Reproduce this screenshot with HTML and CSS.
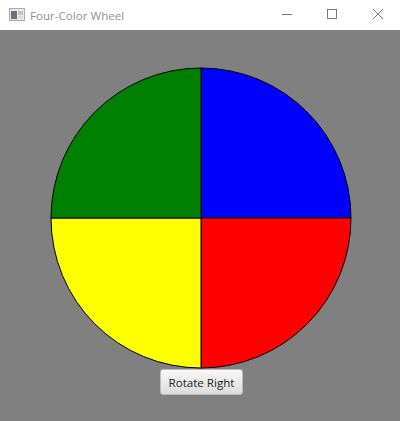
FILE: index.html
```html
<!DOCTYPE html>
<html lang="en">
<head>
  <meta charset="UTF-8">
  <title>Four-Color Wheel</title>
  <link rel="stylesheet" href="styles.css">
</head>
<body>
  <div class="titlebar">
    <svg class="app-icon" width="16" height="16" viewBox="0 0 16 16">
      <rect x="0.5" y="1.5" width="15" height="12" fill="#e8eaec" stroke="#a8acb0"/>
      <rect x="2" y="4" width="6" height="8" fill="#66747c"/>
      <rect x="9" y="4" width="5" height="4" fill="#c0c4c8"/>
      <rect x="9" y="9" width="5" height="3" fill="#dcdee0"/>
    </svg>
    <span class="title">Four-Color Wheel</span>
    <div class="window-buttons">
      <svg width="12" height="12" viewBox="0 0 12 12"><path d="M2 6.5H12" stroke="#777" fill="none"/></svg>
      <svg width="12" height="12" viewBox="0 0 12 12"><rect x="1.5" y="1.5" width="9" height="9" stroke="#777" fill="none"/></svg>
      <svg width="12" height="12" viewBox="0 0 12 12"><path d="M1 1L11 11M11 1L1 11" stroke="#777" fill="none"/></svg>
    </div>
  </div>
  <div class="stage">
    <svg class="wheel" width="302" height="302" viewBox="-151 -151 302 302">
      <path d="M0 0V-150A150 150 0 0 1 150 0Z" fill="#0000ff" stroke="#000"/>
      <path d="M0 0H150A150 150 0 0 1 0 150Z" fill="#ff0000" stroke="#000"/>
      <path d="M0 0V150A150 150 0 0 1 -150 0Z" fill="#ffff00" stroke="#000"/>
      <path d="M0 0H-150A150 150 0 0 1 0 -150Z" fill="#008000" stroke="#000"/>
    </svg>
    <button class="rotate-btn">Rotate Right</button>
  </div>
</body>
</html>
```
FILE: styles.css
```css
html, body {
  height: 100%;
}
body {
  margin: 0;
  background-color: #808080;
  font-family: 'Open Sans', 'Liberation Sans', sans-serif;
  overflow: hidden;
}
.titlebar {
  display: flex;
  align-items: center;
  height: 30px;
  padding-left: 9px;
  background-color: #fff;
}
.app-icon {
  margin-right: 5px;
}
.title {
  font-size: 11.6px;
  color: #8f8f8f;
}
.window-buttons {
  display: flex;
  gap: 34px;
  margin-left: auto;
  margin-right: 16px;
  margin-bottom: 2px;
}
.stage {
  display: flex;
  flex-direction: column;
  align-items: center;
  padding-top: 37px;
  padding-left: 2px;
}
.wheel {
  display: block;
}
.rotate-btn {
  width: 83px;
  height: 26px;
  margin-left: 1px;
  padding: 0;
  border: 1px solid #bcbcbc;
  border-radius: 3px;
  background: linear-gradient(#f8f8f8, #dcdcdc);
  color: #222;
  font-family: inherit;
  font-size: 11.6px;
}
```
